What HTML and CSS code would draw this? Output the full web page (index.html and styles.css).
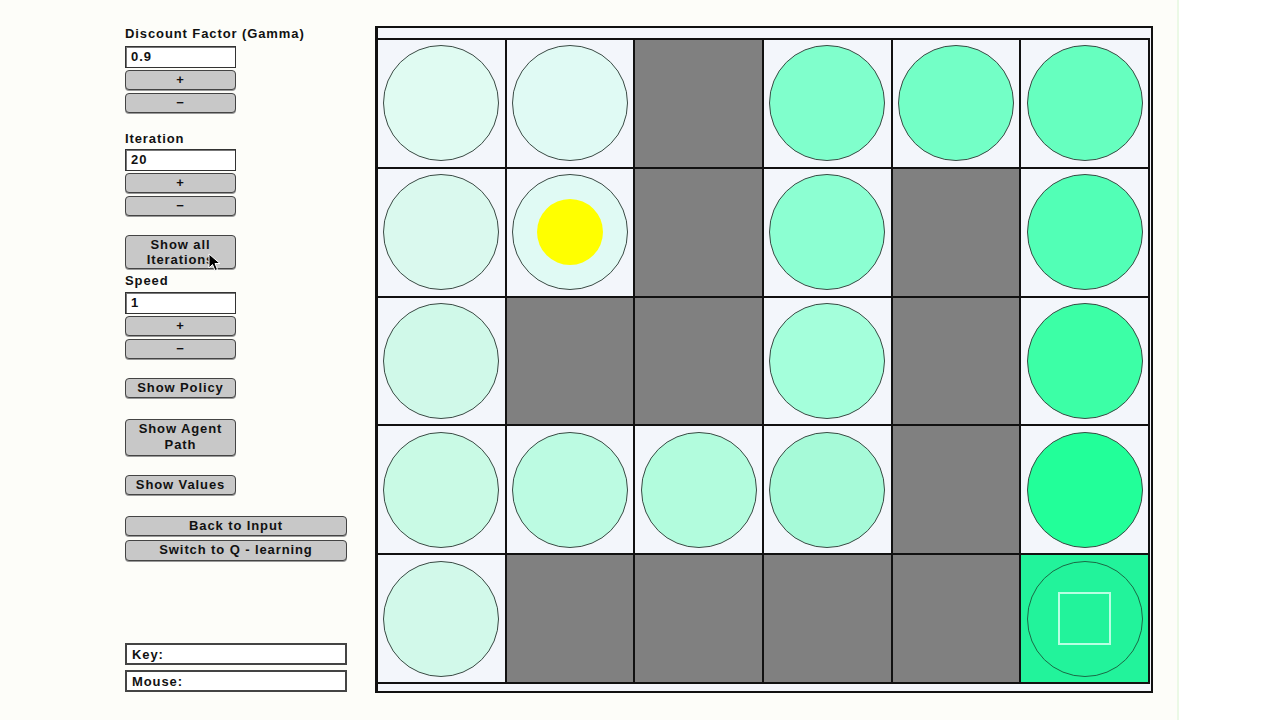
FILE: index.html
```html
<!DOCTYPE html>
<html>
<head>
<meta charset="utf-8">
<link rel="stylesheet" href="styles.css">
</head>
<body>
<div class="page">
  <div class="panel">
    <div class="label">Discount Factor (Gamma)</div>
    <div class="field first-field">0.9</div>
    <div class="btn small">+</div>
    <div class="btn small minus">&minus;</div>

    <div class="label gap-group">Iteration</div>
    <div class="field">20</div>
    <div class="btn small">+</div>
    <div class="btn small minus">&minus;</div>

    <div class="btn small tall gap-iter cursor-host">Show all<br>Iterations
      <svg class="cursor" width="14" height="20" viewBox="0 0 14 20"><path d="M1 1 L1 15 L4.5 11.5 L7 17.5 L9.5 16.5 L7 10.5 L12 10.5 Z" fill="#000" stroke="#fff" stroke-width="1"/></svg>
    </div>
    <div class="label gap-speed">Speed</div>
    <div class="field speed-field">1</div>
    <div class="btn small">+</div>
    <div class="btn small minus">&minus;</div>

    <div class="btn small gap-19">Show Policy</div>
    <div class="btn small taller gap-21">Show Agent<br>Path</div>
    <div class="btn small gap-19">Show Values</div>
    <div class="btn wide gap-21">Back to Input</div>
    <div class="btn wide gap-tight">Switch to Q - learning</div>

    <div class="status gap-status">Key:</div>
    <div class="status gap-status2">Mouse:</div>
  </div>

  <div class="board">
    <div class="grid">
      <div class="cell"><div class="orb" style="background:#e0fbf2"></div></div>
      <div class="cell"><div class="orb" style="background:#e0faf4"></div></div>
      <div class="cell wall"></div>
      <div class="cell"><div class="orb" style="background:#80ffcc"></div></div>
      <div class="cell"><div class="orb" style="background:#73ffc6"></div></div>
      <div class="cell"><div class="orb" style="background:#66ffbf"></div></div>

      <div class="cell"><div class="orb" style="background:#daf9ee"></div></div>
      <div class="cell"><div class="orb" style="background:#e0faf4"><div class="agent"></div></div></div>
      <div class="cell wall"></div>
      <div class="cell"><div class="orb" style="background:#8cffd2"></div></div>
      <div class="cell wall"></div>
      <div class="cell"><div class="orb" style="background:#52ffb6"></div></div>

      <div class="cell"><div class="orb" style="background:#d0f9e9"></div></div>
      <div class="cell wall"></div>
      <div class="cell wall"></div>
      <div class="cell"><div class="orb" style="background:#a4ffdb"></div></div>
      <div class="cell wall"></div>
      <div class="cell"><div class="orb" style="background:#3cffa6"></div></div>

      <div class="cell"><div class="orb" style="background:#c9fae5"></div></div>
      <div class="cell"><div class="orb" style="background:#bcfbe2"></div></div>
      <div class="cell"><div class="orb" style="background:#b2fcdd"></div></div>
      <div class="cell"><div class="orb" style="background:#a6fad8"></div></div>
      <div class="cell wall"></div>
      <div class="cell"><div class="orb" style="background:#22ff99"></div></div>

      <div class="cell"><div class="orb" style="background:#d2f9ea"></div></div>
      <div class="cell wall"></div>
      <div class="cell wall"></div>
      <div class="cell wall"></div>
      <div class="cell wall"></div>
      <div class="cell goal"><div class="orb goal-orb"><div class="goal-box"></div></div></div>
    </div>
  </div>
</div>
</body>
</html>
```
FILE: styles.css
```css
html, body {
  margin: 0;
  padding: 0;
  background: #ffffff;
}
body {
  width: 1280px;
  height: 720px;
  overflow: hidden;
  font-family: "Liberation Sans", Arial, sans-serif;
}
.page {
  width: 1177px;
  height: 720px;
  background: #fdfdf9;
  border-right: 2px solid #ebf9e6;
  display: flex;
  align-items: flex-start;
}
.panel {
  box-sizing: border-box;
  width: 375px;
  padding: 26px 0 0 125px;
  display: flex;
  flex-direction: column;
  align-items: flex-start;
  font-size: 13px;
  font-weight: bold;
  letter-spacing: 0.9px;
  color: #111;
}
.label {
  height: 16px;
  line-height: 16px;
}
.field {
  box-sizing: border-box;
  margin-top: 2px;
  width: 111px;
  height: 22px;
  line-height: 20px;
  padding-left: 5px;
  background: #fff;
  border: 1px solid #333;
  box-shadow: inset 1px 1px 0 #777;
}
.first-field { margin-top: 4px; }
.speed-field { margin-top: 3px; }
.btn {
  box-sizing: border-box;
  margin-top: 2px;
  height: 20px;
  line-height: 17px;
  background: #c8c8c8;
  border: 1px solid #444;
  border-radius: 4px;
  text-align: center;
  box-shadow: 0 1px 0 #999;
}
.btn.minus { margin-top: 3px; }
.small { width: 111px; }
.wide { width: 222px; }
.tall {
  height: 34px;
  line-height: 15px;
  padding-top: 1px;
}
.taller {
  height: 37px;
  line-height: 16px;
  padding-top: 1px;
}
.gap-group { margin-top: 18px; }
.gap-iter { margin-top: 19px; }
.gap-19 { margin-top: 19px; }
.gap-21 { margin-top: 21px; }
.gap-speed { margin-top: 4px; }
.gap-tight { margin-top: 4px; height: 21px; }
.status {
  box-sizing: border-box;
  width: 222px;
  height: 22px;
  line-height: 19px;
  padding-left: 5px;
  background: #fff;
  border: 2px solid #444;
}
.gap-status { margin-top: 82px; }
.gap-status2 { margin-top: 5px; }
.cursor-host { position: relative; }
.cursor {
  position: absolute;
  left: 82px;
  top: 17px;
}
.board {
  box-sizing: border-box;
  margin-top: 26px;
  width: 778px;
  height: 667px;
  border: 2px solid #111;
  border-left-width: 3px;
  padding: 10px 1px 7px 0;
  background: #f4f6fb;
}
.grid {
  box-sizing: border-box;
  width: 772px;
  height: 646px;
  display: grid;
  grid-template-columns: repeat(6, 1fr);
  grid-template-rows: repeat(5, 1fr);
  border-top: 2px solid #111;
}
.cell {
  box-sizing: border-box;
  border-right: 2px solid #111;
  border-bottom: 2px solid #111;
  background: #f3f6fb;
  display: flex;
  align-items: center;
  justify-content: center;
}
.wall { background: #808080; }
.orb {
  box-sizing: border-box;
  width: 116px;
  height: 116px;
  border-radius: 50%;
  border: 1px solid #3a4a44;
  display: flex;
  align-items: center;
  justify-content: center;
}
.agent {
  width: 66px;
  height: 66px;
  border-radius: 50%;
  background: #ffff00;
}
.goal { background: #22f39b; }
.goal-orb {
  background: #22f39b;
  border-color: #1a6a45;
}
.goal-box {
  box-sizing: border-box;
  width: 53px;
  height: 53px;
  border: 2px solid #b8ffe2;
}
```
